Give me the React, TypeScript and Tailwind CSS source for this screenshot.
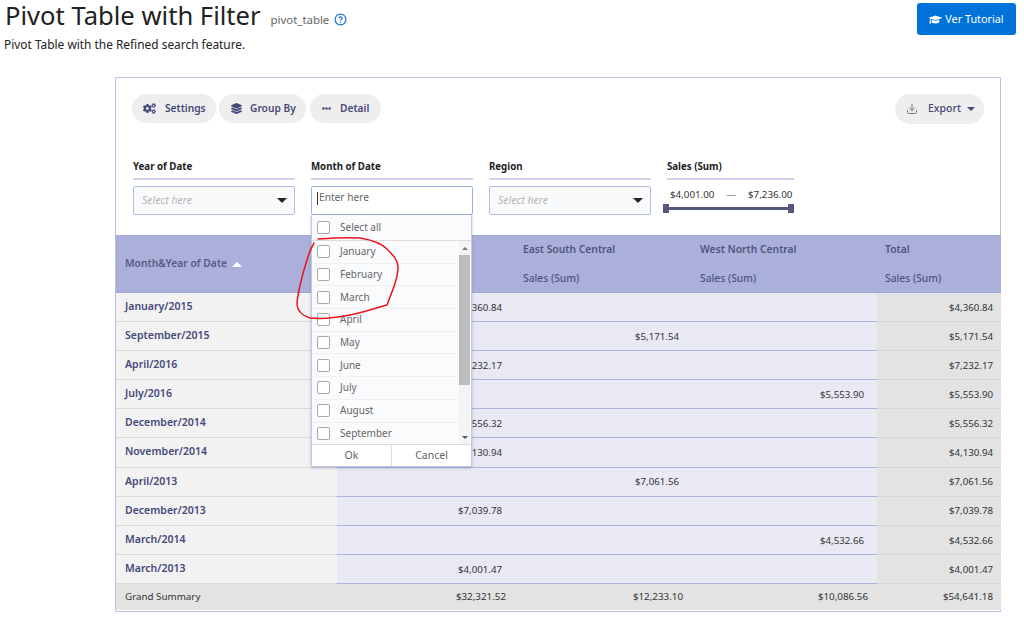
import { FaCogs, FaLayerGroup, FaEllipsisH, FaGraduationCap } from "react-icons/fa";
import { Download, CircleHelp } from "lucide-react";

const rows: [string, number, string, string][] = [
  ["January/2015", 1, "$4,360.84", "$4,360.84"],
  ["September/2015", 2, "$5,171.54", "$5,171.54"],
  ["April/2016", 1, "$7,232.17", "$7,232.17"],
  ["July/2016", 3, "$5,553.90", "$5,553.90"],
  ["December/2014", 1, "$5,556.32", "$5,556.32"],
  ["November/2014", 1, "$4,130.94", "$4,130.94"],
  ["April/2013", 2, "$7,061.56", "$7,061.56"],
  ["December/2013", 1, "$7,039.78", "$7,039.78"],
  ["March/2014", 3, "$4,532.66", "$4,532.66"],
  ["March/2013", 1, "$4,001.47", "$4,001.47"],
];
const months = ["January", "February", "March", "April", "May", "June", "July", "August", "September"];

function Pill({ icon, label, cls }: { icon: React.ReactNode; label: string; cls: string }) {
  return (
    <div className={`${cls} h-[29px] rounded-full bg-[#eeeeee] flex items-center text-[10.2px] font-semibold text-[#45497a]`}>
      <span className="w-[14px] flex justify-center">{icon}</span>
      {label}
    </div>
  );
}

function Label({ text }: { text: string }) {
  return <div className="h-[14px] text-[9.7px] leading-[14px] font-bold text-[#222222]">{text}</div>;
}

function Rule() {
  return <div className="h-[2px] bg-[#cdd1ea] mt-[4px] mb-[6px]" />;
}

function Caret() {
  return <span className="border-x-[5px] border-t-[5px] border-x-transparent border-t-[#222222]" />;
}

function SelectBox() {
  return (
    <div className="w-full h-[29px] border border-[#b4bbe2] rounded-[2px] bg-[#f9fafc] flex items-center justify-between pl-[8px] pr-[7px]">
      <span className="text-[10.5px] italic text-[#b5b5b5]">Select here</span>
      <Caret />
    </div>
  );
}

function Check() {
  return <span className="w-[13px] h-[13px] border border-[#a8a8a8] rounded-[2px] bg-white shrink-0" />;
}

export default function App() {
  return (
    <div className="relative w-[1024px] h-[619px] overflow-hidden bg-white font-['Noto_Sans','Open_Sans',sans-serif]">
      <header className="flex justify-between pl-[5px] pr-[8px] pt-[2px] h-[77px]">
        <div>
          <div className="flex items-center h-[28px]">
            <h1 className="text-[25.6px] leading-[28px] text-[#222222]">Pivot Table with Filter</h1>
            <span className="ml-[10px] mt-[7px] text-[11.4px] text-[#666666]">pivot_table</span>
            <CircleHelp className="ml-[5px] mt-[7px] text-[#1273d6]" size={13} strokeWidth={2.2} />
          </div>
          <p className="mt-[5px] -ml-px text-[11.9px] leading-[18px] text-[#222222]">Pivot Table with the Refined search feature.</p>
        </div>
        <button className="w-[99px] h-[32px] mt-px rounded-[3px] bg-[#0073da] text-white text-[10.8px] flex items-center justify-center gap-[3px]">
          <FaGraduationCap size={13} />
          Ver Tutorial
        </button>
      </header>

      <main className="ml-[115px] w-[886px] h-[535px] border border-[#bcc1e4] bg-white">
        <div className="flex justify-between pt-[16px] pl-[16px] pr-[16px]">
          <div className="flex">
            <Pill cls="w-[84px] pl-[10px] gap-[9px]" label="Settings" icon={<FaCogs size={13} />} />
            <Pill cls="w-[87px] ml-[3px] pl-[10px] gap-[7px]" label="Group By" icon={<FaLayerGroup size={11} />} />
            <Pill cls="w-[71px] ml-[4px] pl-[9px] gap-[7px]" label="Detail" icon={<FaEllipsisH size={9} />} />
          </div>
          <div className="w-[89px] h-[30px] rounded-full bg-[#eeeeee] flex items-center pl-[11px] pb-[1px] text-[10.5px] font-medium text-[#45497a]">
            <Download size={12} className="text-[#777777]" />
            <span className="ml-[10px]">Export</span>
            <span className="ml-[6px] border-x-[4px] border-t-[4px] border-x-transparent border-t-[#45497a]" />
          </div>
        </div>

        <div className="flex h-[55px] gap-[16.4px] pl-[17px] mt-[36px]">
          <div className="w-[161.6px]">
            <Label text="Year of Date" />
            <Rule />
            <SelectBox />
          </div>
          <div className="w-[161.6px]">
            <Label text="Month of Date" />
            <Rule />
            <div className="h-[29px] border border-[#9db1e0] rounded-[2px] bg-white flex items-center pl-[5px] text-[10.2px] text-[#666666]">
              <span className="w-px h-[13px] bg-[#333333] mr-px -mt-[4px]" />
              <span className="-mt-[5px]">Enter here</span>
            </div>
          </div>
          <div className="w-[161.6px]">
            <Label text="Region" />
            <Rule />
            <SelectBox />
          </div>
          <div className="w-[127.5px]">
            <Label text="Sales (Sum)" />
            <Rule />
            <div className="flex justify-between pl-[3px] pr-[2px] mt-[8px] text-[9.8px] leading-[14px] text-[#333333]">
              <span>$4,001.00</span>
              <span className="text-[#555555]">—</span>
              <span>$7,236.00</span>
            </div>
            <div className="h-[9px] -ml-[4px] mt-[2px] flex items-center justify-between">
              <span className="w-[6px] h-[9px] bg-[#55597f]" />
              <span className="flex-1 h-[3px] bg-[#55597f]" />
              <span className="w-[6px] h-[9px] bg-[#55597f]" />
            </div>
          </div>
        </div>

        <div className="mt-[20px] w-[885px] text-[#45497a]">
          <div className="h-[58px] flex bg-[#aab0d9] border-y border-[#a2a9d6] text-[10.3px] font-semibold text-[#50547f]">
            <div className="w-[221px] pl-[9px] flex items-center gap-[5px] text-[#565a85]">
              Month&amp;Year of Date
              <span className="border-x-[5px] border-b-[5px] border-x-transparent border-b-white" />
            </div>
            <div className="w-[178px]" />
            {[
              ["w-[177px]", "East South Central"],
              ["w-[185px]", "West North Central"],
              ["w-[124px]", "Total"],
            ].map(([w, t]) => (
              <div key={t} className={`${w} pl-[8px] flex flex-col justify-between pt-[5px] pb-[6px] leading-[16px]`}>
                <span>{t}</span>
                <span className="font-medium">Sales (Sum)</span>
              </div>
            ))}
          </div>

          {rows.map(([name, col, v, total]) => (
            <div key={name} className="h-[29.1px] flex text-[9.7px]">
              <div className="w-[221px] pl-[9px] pt-[6px] bg-[#f2f2f2] border-b border-[#d9d9d9] text-[10.5px] font-semibold text-[#45497a]">{name}</div>
              {[
                ["w-[178px]", 1],
                ["w-[177px]", 2],
                ["w-[185px]", 3],
              ].map(([w, i]) => (
                <div key={i} className={`${w} pr-[13px] pt-[2px] flex items-center justify-end bg-[#e9e9f4] border-b border-[#aab2de] text-[#333333]`}>
                  {col === i ? v : ""}
                </div>
              ))}
              <div className="w-[124px] pr-[8px] pt-[2px] flex items-center justify-end bg-[#e3e3e3] border-b border-[#d6d6d6] text-[#333333]">{total}</div>
            </div>
          ))}

          <div className="h-[26px] pt-px flex items-center bg-[#e3e3e3] text-[9.8px] text-[#333333]">
            <div className="w-[221px] pl-[9px]">Grand Summary</div>
            <div className="w-[178px] pr-[9px] text-right">$32,321.52</div>
            <div className="w-[177px] pr-[9px] text-right">$12,233.10</div>
            <div className="w-[185px] pr-[9px] text-right">$10,086.56</div>
            <div className="w-[124px] pr-[8px] text-right">$54,641.18</div>
          </div>
        </div>
      </main>

      <div className="absolute left-[311px] top-[215px] w-[161px] h-[252px] bg-white rounded-b-[2px] border-x border-b border-[#c3c7e6] shadow-[0_1px_3px_rgba(120,125,170,0.5)] text-[10px] text-[#666666] flex flex-col">
        <div className="h-[26px] shrink-0 flex items-center gap-[10px] pl-[5px] bg-[#fbfbfd] border-b border-[#dcdcdc]">
          <Check />
          <span>Select all</span>
        </div>
        <div className="flex h-[203px] shrink-0">
          <div className="flex-1 bg-[#fafbfd] overflow-hidden">
            {months.map((m) => (
              <div key={m} className="h-[22.7px] flex items-center gap-[10px] pl-[5px] border-b border-[#f0f0f4]">
                <Check />
                <span>{m}</span>
              </div>
            ))}
          </div>
          <div className="w-[11px] mr-[1px] bg-[#f4f4f4] flex flex-col items-center">
            <span className="mt-[6px] border-x-[3px] border-b-[3px] border-x-transparent border-b-[#777777]" />
            <div className="w-full h-[130px] mt-[5px] bg-[#bcbcbc]" />
            <span className="mt-auto mb-[5px] border-x-[3px] border-t-[3px] border-x-transparent border-t-[#555555]" />
          </div>
        </div>
        <div className="flex-1 flex border-t border-[#dcdcdc] text-[10.5px]">
          <div className="w-[80px] flex items-center justify-center border-r border-[#dcdcdc]">Ok</div>
          <div className="flex-1 flex items-center justify-center">Cancel</div>
        </div>
      </div>

      <svg className="absolute left-0 top-0 pointer-events-none" width="1024" height="619" fill="none">
        <path
          d="M318 239 C332 238 348 237 360 238 C372 240 382 244 387 249 C393 255 398 260 398 267 C398 277 394 287 387 305 C376 308 365 312 350 315 C335 318 320 319 310 318 C303 316 298 312 297 305 C297 296 302 275 307 260 C309 253 311 248 314 243"
          stroke="#e8141c"
          strokeWidth="1.5"
          strokeLinecap="round"
        />
      </svg>
    </div>
  );
}
